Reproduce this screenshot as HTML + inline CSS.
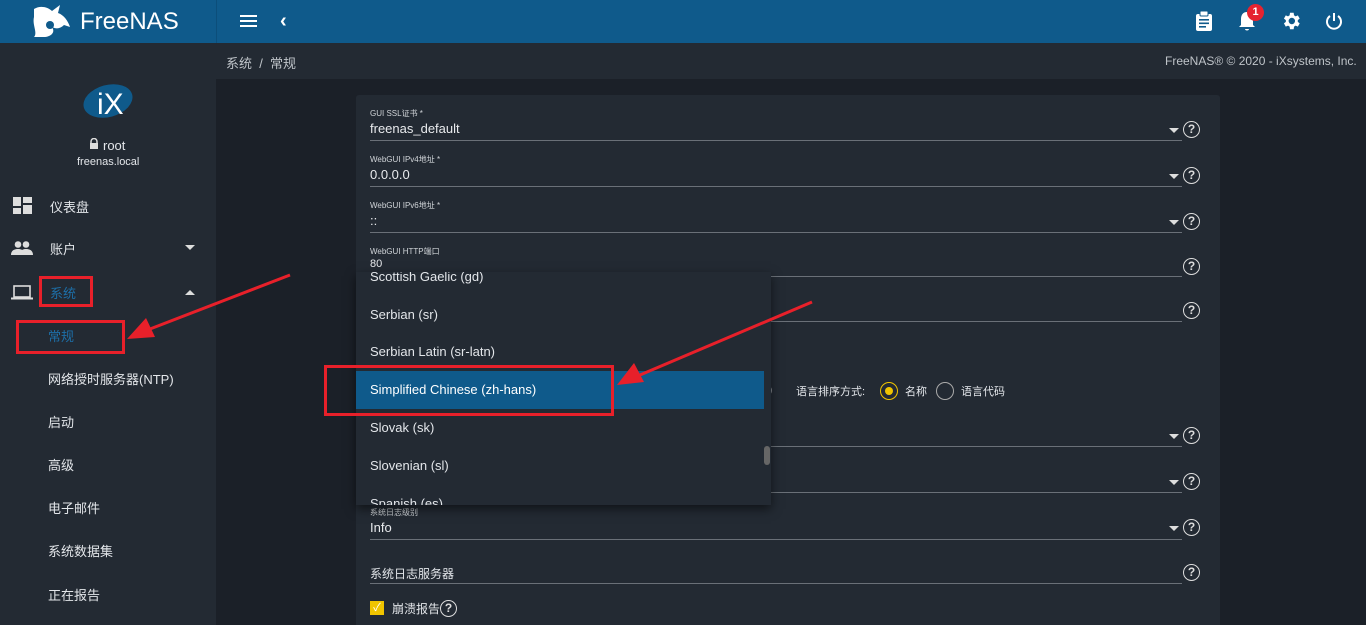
<!DOCTYPE html>
<html><head><meta charset="utf-8"><style>
*{margin:0;padding:0;box-sizing:border-box}
html,body{width:1366px;height:625px;overflow:hidden}
body{background:#1b2028;font-family:"Liberation Sans","Noto Sans CJK SC",sans-serif;color:#e3e6ea;position:relative}
.a{position:absolute}
.hdr{left:0;top:0;width:1366px;height:43px;background:#0f5a8b}
.side{left:0;top:43px;width:216px;height:582px;background:#232a33}
.bc{left:216px;top:43px;width:1150px;height:36px;background:#232a33}
.card{left:356px;top:95px;width:864px;height:530px;background:#232a33;border-radius:3px 3px 0 0}
.lbl{font-size:8px;color:#d0d4d8;left:370px}
.val{font-size:13px;color:#e8eaed;left:370px}
.ul{left:370px;width:812px;height:1px;background:#6a7078}
.tri{width:0;height:0;border-left:5px solid transparent;border-right:5px solid transparent;border-top:5px solid #ddd}
.help{width:17px;height:17px;border:1.8px solid #ddd;border-radius:50%;font-size:12px;font-weight:bold;text-align:center;line-height:14px;color:#ddd}
.nav{font-size:13px;color:#e3e6ea;left:48px}
.dd{left:356px;top:272px;width:415px;height:233px;background:#232a33;box-shadow:0 4px 10px rgba(0,0,0,.55);overflow:hidden}
.it{position:absolute;left:14px;font-size:13px;color:#e3e6ea}
.red{border:3px solid #e8202a}
</style></head><body>
<div class="a hdr"></div>
<div class="a" style="left:216px;top:0;width:1px;height:43px;background:#0c4e7a"></div>
<svg class="a" style="left:30px;top:3px" width="42" height="36" viewBox="0 0 42 36"><path d="M4 6 C10 2 18 4 22 8 L30 2 L28 10 C34 12 38 18 40 24 L34 22 C30 26 26 26 22 24 C26 30 20 34 14 34 L4 34 C8 30 2 22 4 14 Z" fill="#fff"/><circle cx="20" cy="22" r="4" fill="#0f5a8b"/></svg>
<div class="a" style="left:80px;top:8px;font-size:24px;color:#fff">FreeNAS</div>
<div class="a" style="left:240px;top:15px;width:17px;height:2px;background:#fff;box-shadow:0 5px 0 #fff,0 10px 0 #fff"></div>
<div class="a" style="left:280px;top:10px;font-size:20px;color:#fff;font-weight:bold">‹</div>
<svg class="a" style="left:1195px;top:11px" width="18" height="20" viewBox="0 0 18 20"><rect x="1" y="3" width="16" height="17" rx="2" fill="#fff"/><rect x="5" y="0" width="8" height="5" rx="1" fill="#fff" stroke="#0f5a8b"/><rect x="4" y="8" width="10" height="1.6" fill="#0f5a8b"/><rect x="4" y="11.5" width="10" height="1.6" fill="#0f5a8b"/><rect x="4" y="15" width="7" height="1.6" fill="#0f5a8b"/></svg>
<svg class="a" style="left:1238px;top:11px" width="18" height="21" viewBox="0 0 18 21"><path d="M9 1 C13 1 15 4 15 8 L15 14 L17 16 L1 16 L3 14 L3 8 C3 4 5 1 9 1Z M7 18 L11 18 C11 20 7 20 7 18Z" fill="#fff"/></svg>
<div class="a" style="left:1247px;top:4px;width:17px;height:17px;border-radius:50%;background:#e52330;color:#fff;font-size:11px;font-weight:bold;text-align:center;line-height:17px">1</div>
<svg class="a" style="left:1280px;top:10px" width="22" height="22" viewBox="0 0 24 24"><path fill="#fff" d="M19.4 13a7.5 7.5 0 000-2l2.1-1.6-2-3.5-2.5 1a7 7 0 00-1.7-1L14.9 3h-4l-.4 2.9a7 7 0 00-1.7 1l-2.5-1-2 3.5L6.4 11a7.5 7.5 0 000 2l-2.1 1.6 2 3.5 2.5-1a7 7 0 001.7 1l.4 2.9h4l.4-2.9a7 7 0 001.7-1l2.5 1 2-3.5zM12.9 15.5a3.5 3.5 0 110-7 3.5 3.5 0 010 7z"/></svg>
<svg class="a" style="left:1325px;top:12px" width="18" height="18" viewBox="0 0 18 18"><path d="M5 4 A7 7 0 1 0 13 4" stroke="#fff" stroke-width="2" fill="none"/><path d="M9 1 L9 9" stroke="#fff" stroke-width="2"/></svg>

<div class="a side"></div>
<div class="a bc"></div>
<div class="a" style="left:226px;top:53px;font-size:13px;color:#bfc4c9">系统 &nbsp;/ &nbsp;常规</div>
<div class="a" style="left:1165px;top:54px;font-size:12px;color:#bfc4c9">FreeNAS® © 2020 - iXsystems, Inc.</div>

<svg class="a" style="left:82px;top:82px" width="52" height="38" viewBox="0 0 52 38"><ellipse cx="26" cy="19" rx="25" ry="16" transform="rotate(-15 26 19)" fill="#0f5a8b"/><text x="15" y="32" fill="#fff" font-size="30" font-family="Liberation Sans">iX</text></svg>
<svg class="a" style="left:89px;top:138px" width="10" height="12" viewBox="0 0 10 12"><path d="M2 5 V3.5 a3 3 0 0 1 6 0 V5" stroke="#ddd" stroke-width="1.5" fill="none"/><rect x="1" y="5" width="8" height="6" fill="#ddd"/></svg>
<div class="a" style="left:103px;top:138px;font-size:13px">root</div>
<div class="a" style="left:77px;top:156px;font-size:11px">freenas.local</div>

<svg class="a" style="left:13px;top:197px" width="19" height="17" viewBox="0 0 19 17"><rect x="0" y="0" width="8" height="9" fill="#ddd"/><rect x="0" y="11" width="8" height="6" fill="#ddd"/><rect x="10" y="0" width="9" height="6" fill="#ddd"/><rect x="10" y="8" width="9" height="9" fill="#ddd"/></svg>
<div class="a nav" style="left:50px;top:197px">仪表盘</div>
<svg class="a" style="left:11px;top:241px" width="22" height="14" viewBox="0 0 22 14"><circle cx="7" cy="3.5" r="3.3" fill="#ddd"/><circle cx="15" cy="3.5" r="3.3" fill="#ddd"/><path d="M0 14 C0 9 4 8 7 8 C10 8 14 9 14 14Z M9 14 C9 9 12 8 15 8 C18 8 22 9 22 14Z" fill="#ddd"/></svg>
<div class="a nav" style="left:50px;top:239px">账户</div>
<div class="a tri" style="left:185px;top:245px"></div>
<svg class="a" style="left:11px;top:285px" width="22" height="15" viewBox="0 0 22 15"><rect x="3" y="1" width="16" height="11" fill="none" stroke="#ddd" stroke-width="1.6"/><rect x="0" y="12.5" width="22" height="2" fill="#ddd"/></svg>
<div class="a nav" style="left:50px;top:283px;color:#1d6fa8">系统</div>
<div class="a" style="left:185px;top:290px;width:0;height:0;border-left:5px solid transparent;border-right:5px solid transparent;border-bottom:5px solid #ddd"></div>
<div class="a nav" style="top:326px;color:#1d6fa8">常规</div>
<div class="a nav" style="top:369px">网络授时服务器(NTP)</div>
<div class="a nav" style="top:412px">启动</div>
<div class="a nav" style="top:455px">高级</div>
<div class="a nav" style="top:498px">电子邮件</div>
<div class="a nav" style="top:541px">系统数据集</div>
<div class="a nav" style="top:585px">正在报告</div>

<div class="a card"></div>
<div class="a lbl" style="top:108px">GUI SSL证书 *</div>
<div class="a val" style="top:121px">freenas_default</div>
<div class="a ul" style="top:140px"></div>
<div class="a lbl" style="top:154px">WebGUI IPv4地址 *</div>
<div class="a val" style="top:167px">0.0.0.0</div>
<div class="a ul" style="top:186px"></div>
<div class="a lbl" style="top:200px">WebGUI IPv6地址 *</div>
<div class="a val" style="top:213px">::</div>
<div class="a ul" style="top:232px"></div>
<div class="a lbl" style="top:246px">WebGUI HTTP端口</div>
<div class="a val" style="top:258px;font-size:11px">80</div>
<div class="a ul" style="top:276px"></div>
<div class="a ul" style="top:321px"></div>
<div class="a" style="left:768px;top:382px;font-size:13px">)</div>
<div class="a" style="left:796px;top:383px;font-size:11px">语言排序方式:</div>
<div class="a" style="left:880px;top:382px;width:18px;height:18px;border:1.5px solid #f0c400;border-radius:50%"></div>
<div class="a" style="left:885px;top:387px;width:8px;height:8px;background:#f0c400;border-radius:50%"></div>
<div class="a" style="left:905px;top:383px;font-size:11px">名称</div>
<div class="a" style="left:936px;top:382px;width:18px;height:18px;border:1.5px solid #aaa;border-radius:50%"></div>
<div class="a" style="left:961px;top:383px;font-size:11px">语言代码</div>
<div class="a ul" style="top:446px"></div>
<div class="a ul" style="top:492px"></div>
<div class="a lbl" style="top:507px">系统日志级别</div>
<div class="a val" style="top:520px">Info</div>
<div class="a ul" style="top:539px"></div>
<div class="a" style="left:370px;top:565px;font-size:12px">系统日志服务器</div>
<div class="a ul" style="top:583px"></div>
<div class="a" style="left:370px;top:601px;width:14px;height:14px;background:#f0c400;color:#fff;font-size:11px;line-height:14px;text-align:center">✓</div>
<div class="a" style="left:392px;top:600px;font-size:12px">崩溃报告</div>
<div class="a help" style="left:440px;top:600px">?</div>

<div class="a tri" style="left:1169px;top:128px"></div><div class="a help" style="left:1183px;top:121px">?</div>
<div class="a tri" style="left:1169px;top:174px"></div><div class="a help" style="left:1183px;top:167px">?</div>
<div class="a tri" style="left:1169px;top:220px"></div><div class="a help" style="left:1183px;top:213px">?</div>
<div class="a help" style="left:1183px;top:258px">?</div>
<div class="a help" style="left:1183px;top:302px">?</div>
<div class="a tri" style="left:1169px;top:434px"></div><div class="a help" style="left:1183px;top:427px">?</div>
<div class="a tri" style="left:1169px;top:480px"></div><div class="a help" style="left:1183px;top:473px">?</div>
<div class="a tri" style="left:1169px;top:526px"></div><div class="a help" style="left:1183px;top:519px">?</div>
<div class="a help" style="left:1183px;top:564px">?</div>

<div class="a dd">
<div class="it" style="top:-3px">Scottish Gaelic (gd)</div>
<div class="it" style="top:35px">Serbian (sr)</div>
<div class="it" style="top:72px">Serbian Latin (sr-latn)</div>
<div style="position:absolute;left:0;top:99px;width:408px;height:38px;background:#0f5a8b"></div>
<div class="it" style="top:110px;color:#fff">Simplified Chinese (zh-hans)</div>
<div class="it" style="top:148px">Slovak (sk)</div>
<div class="it" style="top:186px">Slovenian (sl)</div>
<div class="it" style="top:224px">Spanish (es)</div>
<div style="position:absolute;left:408px;top:174px;width:6px;height:19px;background:#666;border-radius:3px"></div>
</div>

<div class="a red" style="left:39px;top:276px;width:54px;height:31px"></div>
<div class="a red" style="left:16px;top:320px;width:109px;height:34px"></div>
<div class="a red" style="left:324px;top:365px;width:290px;height:51px"></div>
<svg class="a" style="left:0;top:0" width="1366" height="625">
<path d="M290 275 L150 329" stroke="#e8202a" stroke-width="3"/><path d="M127 339 L146 318 L155 337Z" fill="#e8202a"/>
<path d="M812 302 L640 375" stroke="#e8202a" stroke-width="3"/><path d="M617 385 L634 363 L644 382Z" fill="#e8202a"/>
</svg>
</body></html>
